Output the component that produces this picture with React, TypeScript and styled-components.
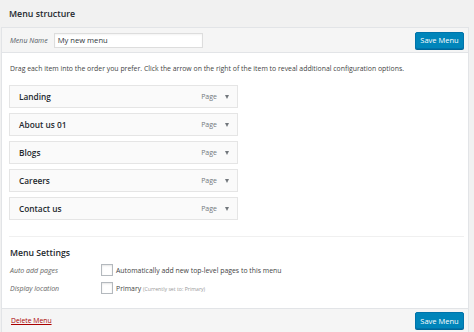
import React from "react";
import styled, { createGlobalStyle } from "styled-components";

const Global = createGlobalStyle`
  html, body { margin: 0; padding: 0; }
  body {
    background: #f1f1f1;
    font-family: "Open Sans", "Noto Sans", sans-serif;
    color: #23282d;
    font-size: 8px;
    overflow: hidden;
  }
  * { box-sizing: border-box; }
`;

const Page = styled.div`
  width: 474px;
  height: 332px;
  overflow: hidden;
`;

const Title = styled.h2`
  margin: 0;
  height: 27px;
  padding-left: 9px;
  display: flex;
  align-items: center;
  font-size: 8.8px;
  font-weight: 600;
  color: #23282d;
`;

const Panel = styled.div`
  margin-left: 1px;
  width: 468px;
  border: 1px solid #e2e4e7;
  background: #fff;
`;

const Bar = styled.div<{ $top?: boolean }>`
  background: #f5f5f5;
  display: flex;
  align-items: center;
  justify-content: space-between;
  padding: 0 4px 0 8px;
  height: ${(p) => (p.$top ? "25px" : "24px")};
  ${(p) => (p.$top ? "border-bottom: 1px solid #e2e4e7;" : "border-top: 1px solid #e2e4e7;")}
`;

const NameGroup = styled.label`
  display: flex;
  align-items: center;
  gap: 6px;
`;

const ItalicLabel = styled.span`
  font-style: italic;
  font-size: 7px;
  color: #555d66;
`;

const NameInput = styled.div`
  width: 149px;
  height: 15px;
  border: 1px solid #ddd;
  background: #fff;
  font-size: 7.6px;
  padding-left: 3px;
  display: flex;
  align-items: center;
  color: #32373c;
  box-shadow: inset 0 1px 2px rgba(0,0,0,0.05);
`;

const SaveButton = styled.button`
  width: 49px;
  height: 17px;
  padding: 0;
  background: #0085ba;
  border: 1px solid #0073aa;
  border-radius: 2px;
  color: #fff;
  font-family: inherit;
  font-size: 7.5px;
  box-shadow: 0 1px 0 #006799;
`;

const Body = styled.div`
  padding: 0 4px 0 7px;
  height: 255px;
`;

const Hint = styled.p`
  margin: 0;
  height: 32px;
  padding-top: 10px;
  padding-left: 1px;
  font-size: 6.9px;
  color: #444;
  line-height: 11px;
`;

const ItemList = styled.ul`
  list-style: none;
  margin: 0;
  padding: 0;
  display: flex;
  flex-direction: column;
  gap: 5px;
`;

const Item = styled.li`
  width: 229px;
  height: 23px;
  border: 1px solid #e5e5e5;
  background: #fafafa;
  display: flex;
  align-items: center;
  padding: 0 8px 0 9px;
  font-size: 8.3px;
  font-weight: 600;
  color: #23282d;
`;

const ItemTitle = styled.span`
  flex: 1;
`;

const ItemType = styled.span`
  font-weight: 400;
  font-size: 7px;
  color: #72777c;
  margin-right: 8px;
`;

const Arrow = styled.span`
  width: 0;
  height: 0;
  border-left: 2.5px solid transparent;
  border-right: 2.5px solid transparent;
  border-top: 4px solid #72777c;
`;

const Settings = styled.div`
  margin-top: 16px;
  border-top: 1px solid #f0f0f0;
  padding-left: 1px;
`;

const SettingsTitle = styled.h3`
  margin: 0;
  padding-top: 9px;
  height: 24px;
  font-size: 8.7px;
  font-weight: 600;
  color: #23282d;
  line-height: 14px;
`;

const Row = styled.div`
  display: flex;
  align-items: center;
  height: 18px;
`;

const RowLabel = styled.span`
  width: 91px;
  font-style: italic;
  font-size: 7px;
  color: #666;
`;

const Check = styled.span`
  width: 12px;
  height: 12px;
  border: 1px solid #b4b9be;
  background: #fff;
  box-shadow: inset 0 1px 2px rgba(0,0,0,0.1);
  margin-right: 3px;
`;

const RowText = styled.span`
  font-size: 6.9px;
  color: #444;
`;

const Small = styled.span`
  font-size: 5.2px;
  color: #999;
`;

const DeleteLink = styled.a`
  color: #a00;
  font-size: 6.8px;
  text-decoration: underline;
  margin-left: 1px;
`;

const items = ["Landing", "About us 01", "Blogs", "Careers", "Contact us"];

export default function App() {
  return (
    <Page>
      <Global />
      <Title>Menu structure</Title>
      <Panel>
        <Bar $top>
          <NameGroup>
            <ItalicLabel>Menu Name</ItalicLabel>
            <NameInput>My new menu</NameInput>
          </NameGroup>
          <SaveButton>Save Menu</SaveButton>
        </Bar>
        <Body>
          <Hint>
            Drag each item into the order you prefer. Click the arrow on the right of the item to reveal additional configuration options.
          </Hint>
          <ItemList>
            {items.map((t) => (
              <Item key={t}>
                <ItemTitle>{t}</ItemTitle>
                <ItemType>Page</ItemType>
                <Arrow />
              </Item>
            ))}
          </ItemList>
          <Settings>
            <SettingsTitle>Menu Settings</SettingsTitle>
            <Row>
              <RowLabel>Auto add pages</RowLabel>
              <Check />
              <RowText>Automatically add new top-level pages to this menu</RowText>
            </Row>
            <Row>
              <RowLabel>Display location</RowLabel>
              <Check />
              <RowText>
                Primary <Small>(Currently set to: Primary)</Small>
              </RowText>
            </Row>
          </Settings>
        </Body>
        <Bar>
          <DeleteLink href="#">Delete Menu</DeleteLink>
          <SaveButton>Save Menu</SaveButton>
        </Bar>
      </Panel>
    </Page>
  );
}
